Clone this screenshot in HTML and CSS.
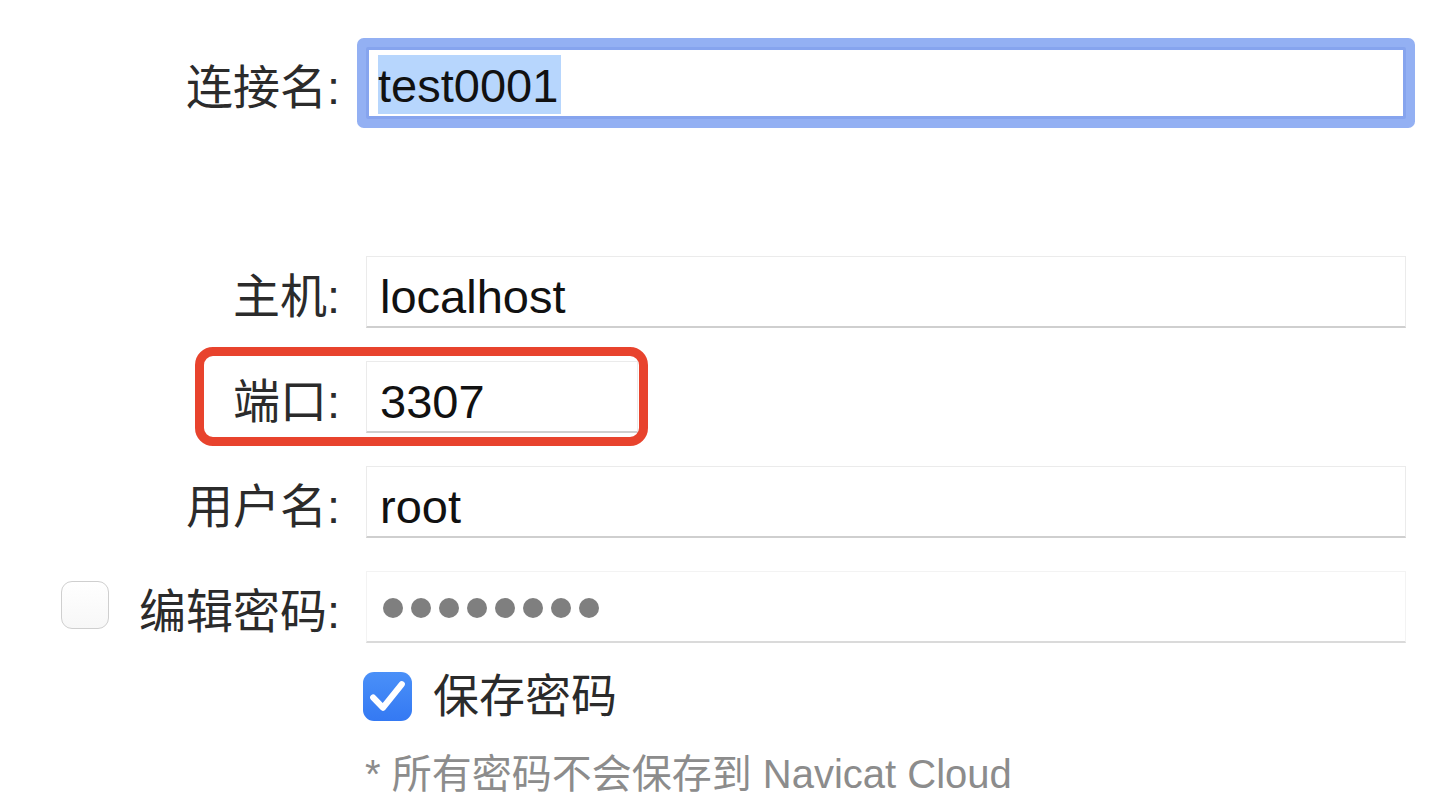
FILE: index.html
```html
<!DOCTYPE html>
<html lang="zh-CN">
<head>
<meta charset="utf-8">
<title>连接</title>
<link rel="stylesheet" href="styles.css">
</head>
<body>
<div class="form">
  <div class="row row-first">
    <div class="label">连接名:</div>
    <div class="field field-focus"><span class="sel">test0001</span></div>
  </div>
  <div class="row">
    <div class="label">主机:</div>
    <div class="field">localhost</div>
  </div>
  <div class="row row-port">
    <div class="label">端口:</div>
    <div class="field field-port">3307</div>
    <div class="highlight"></div>
  </div>
  <div class="row">
    <div class="label">用户名:</div>
    <div class="field">root</div>
  </div>
  <div class="row">
    <div class="label label-check">
      <span class="checkbox"></span>
      <span>编辑密码:</span>
    </div>
    <div class="field field-pass">
      <span class="dot"></span><span class="dot"></span><span class="dot"></span><span class="dot"></span><span class="dot"></span><span class="dot"></span><span class="dot"></span><span class="dot"></span>
    </div>
  </div>
  <div class="save">
    <span class="checkbox checked">
      <svg viewBox="0 0 48 48" width="49" height="49"><polyline points="10,25 19.5,35 38,12" fill="none" stroke="#fff" stroke-width="6" stroke-linecap="round" stroke-linejoin="round"/></svg>
    </span>
    <span class="save-text">保存密码</span>
  </div>
  <div class="note">* 所有密码不会保存到 Navicat Cloud</div>
</div>
</body>
</html>
```
FILE: styles.css
```css
html, body {
  margin: 0;
  padding: 0;
  background: #ffffff;
}
body {
  font-family: "Liberation Sans", "Noto Sans CJK SC", sans-serif;
  width: 1440px;
  height: 804px;
  overflow: hidden;
}
.form {
  padding-top: 47px;
}
.row {
  display: flex;
  align-items: flex-start;
  height: 72px;
  margin-top: 33px;
  position: relative;
}
.row-first {
  margin-top: 0;
  margin-bottom: 137px;
}
.label {
  width: 340px;
  flex: none;
  box-sizing: border-box;
  display: flex;
  justify-content: flex-end;
  align-items: flex-start;
  font-size: 47px;
  line-height: 59px;
  padding-top: 11px;
  color: #2b2b2b;
  white-space: nowrap;
}
.label-check {
  justify-content: space-between;
  padding-left: 61px;
}
.field {
  margin-left: 26px;
  width: 1040px;
  height: 72px;
  flex: none;
  box-sizing: border-box;
  border: 1px solid #ebebeb;
  border-bottom: 2px solid #cfcfcf;
  background: #fff;
  padding: 10px 13px 0;
  font-size: 47px;
  line-height: 59px;
  color: #111;
  white-space: nowrap;
}
.field-focus {
  border: 3px solid #86a4ee;
  border-radius: 2px;
  box-shadow: 0 0 0 9px #93b0f3;
  padding: 5px 9px 0;
}
.sel {
  display: inline-block;
  background: #b7d6fd;
  height: 59px;
  line-height: 62px;
  padding: 0 3px 0 0;
}
.field-port {
  width: 272px;
}
.highlight {
  position: absolute;
  left: 195px;
  top: -14px;
  width: 453px;
  height: 99px;
  box-sizing: border-box;
  border: 9px solid #e8432d;
  border-radius: 18px;
}
.field-pass {
  border-top-color: #f3f3f3;
  border-left-color: #f3f3f3;
  border-right-color: #f3f3f3;
  border-bottom-color: #dadada;
  display: flex;
  align-items: center;
  gap: 8px;
  padding: 2px 16px 0;
}
.dot {
  width: 20px;
  height: 20px;
  border-radius: 50%;
  background: #7f7f7f;
  flex: none;
}
.checkbox {
  width: 48px;
  height: 48px;
  box-sizing: border-box;
  border: 1.5px solid #cfcfcf;
  border-radius: 11px;
  background: linear-gradient(#ffffff, #f7f7f7);
  flex: none;
  margin-top: -1px;
  display: block;
}
.checkbox.checked {
  border: none;
  background: linear-gradient(#4a90f8, #3479f3);
  width: 49px;
  height: 49px;
  margin-top: 0;
}
.checkbox.checked svg {
  display: block;
}
.save {
  display: flex;
  align-items: center;
  margin-top: 29px;
  margin-left: 363px;
  height: 49px;
}
.save-text {
  margin-left: 21px;
  font-size: 46px;
  color: #2b2b2b;
  line-height: 49px;
}
.note {
  margin-left: 365px;
  margin-top: 29px;
  font-size: 40px;
  line-height: 48px;
  color: #8c8c8c;
  white-space: nowrap;
}
```
